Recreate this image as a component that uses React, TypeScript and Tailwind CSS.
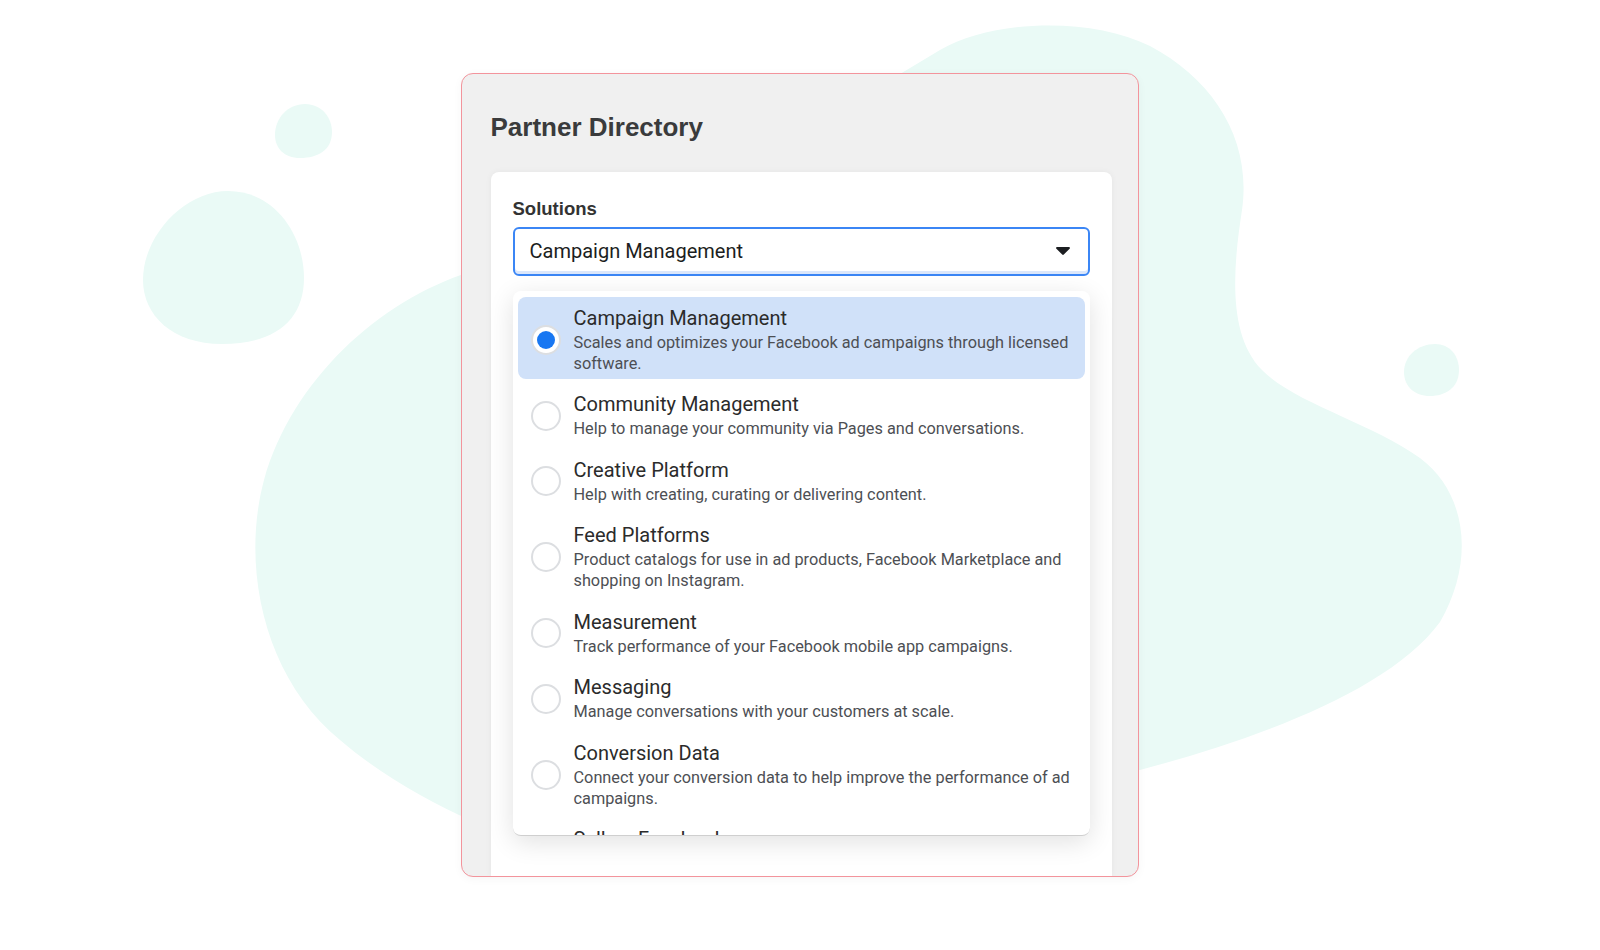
import React from "react";

type Solution = {
  title: string;
  description?: string;
};

const solutions: Solution[] = [
  {
    title: "Campaign Management",
    description: "Scales and optimizes your Facebook ad campaigns through licensed software.",
  },
  {
    title: "Community Management",
    description: "Help to manage your community via Pages and conversations.",
  },
  {
    title: "Creative Platform",
    description: "Help with creating, curating or delivering content.",
  },
  {
    title: "Feed Platforms",
    description: "Product catalogs for use in ad products, Facebook Marketplace and shopping on Instagram.",
  },
  {
    title: "Measurement",
    description: "Track performance of your Facebook mobile app campaigns.",
  },
  {
    title: "Messaging",
    description: "Manage conversations with your customers at scale.",
  },
  {
    title: "Conversion Data",
    description: "Connect your conversion data to help improve the performance of ad campaigns.",
  },
  {
    // only the top of this one shows under the list's edge
    title: "Sell on Facebook",
  },
];

function Blobs() {
  return (
    <svg
      className="absolute inset-0 pointer-events-none"
      width="1600"
      height="950"
      viewBox="0 0 1600 950"
      fill="#eafaf6"
    >
      <path d="M305 104 C322 104 332 118 332 132 C332 150 318 158 300 158 C284 158 275 148 275 135 C275 118 288 104 305 104 Z" />
      <path d="M228 191 C275 191 304 235 304 278 C304 320 275 344 222 344 C172 344 143 315 143 280 C143 235 185 191 228 191 Z" />
      <path d="M1435 344 C1450 344 1459 356 1459 370 C1459 388 1445 396 1430 396 C1414 396 1404 386 1404 372 C1404 356 1418 344 1435 344 Z" />
      <path d="M470 272 C380 300 292 380 264 480 C240 570 266 680 340 740 C382 776 430 802 470 820 L1140 770 C1260 738 1390 690 1440 622 C1476 560 1466 492 1420 458 C1370 422 1296 404 1262 370 C1226 334 1234 262 1242 210 C1252 140 1214 80 1150 46 C1090 16 992 20 940 50 L900 74 L470 74 Z" />
    </svg>
  );
}

function Radio({ checked }: { checked: boolean }) {
  return (
    <span className="flex h-[30px] w-[30px] shrink-0 items-center justify-center rounded-full border-2 border-[#dcdee1] bg-white">
      {checked && <span className="h-[18px] w-[18px] rounded-full bg-[#1877f2]" />}
    </span>
  );
}

function Caret() {
  return (
    <svg width="14" height="8" viewBox="0 0 14 8">
      <path d="M1.2 0 H12.8 C13.8 0 14.3 1.1 13.6 1.8 L7.8 7.6 C7.35 8.05 6.65 8.05 6.2 7.6 L0.4 1.8 C-0.3 1.1 0.2 0 1.2 0 Z" fill="#1c1e21" />
    </svg>
  );
}

export default function App() {
  const selected = "Campaign Management";

  return (
    <div className="relative min-h-[950px] w-full overflow-hidden bg-white">
      <Blobs />

      <div className="relative flex justify-center pt-[73px]">
        <div className="flex h-[804px] w-[678px] flex-col overflow-hidden rounded-[12px] border-[1.5px] border-[#f3949c] bg-[#f0f0f0] pl-[28.5px] pr-[26.5px] pt-[36.5px] shadow-[0_2px_10px_rgba(0,0,0,0.04)]">
          <h1 className="mb-[29px] text-[26px] font-bold leading-8 text-[#3a3b3c] [font-family:'Liberation_Sans',Arial,sans-serif]">
            Partner Directory
          </h1>

          <div className="flex-1 rounded-t-[8px] bg-white px-[22px] pt-[25px] shadow-[0_0_6px_rgba(0,0,0,0.05)]">
            <label className="mb-[6px] block text-[18.5px] font-bold leading-6 text-[#333333] [font-family:'Liberation_Sans',Arial,sans-serif]">
              Solutions
            </label>

            <div className="flex h-[49px] items-center justify-between rounded-[6px] border-2 border-[#3b86f5] bg-white pl-[15px] pr-[18px] shadow-[inset_0_-3px_0_#dbe7fb] [font-family:Roboto,'Liberation_Sans',sans-serif]">
              <span className="text-[20px] leading-6 text-[#1c1e21]">{selected}</span>
              <Caret />
            </div>

            <div className="mt-[15px] h-[545px] overflow-hidden rounded-[8px] border-b border-[#cfcfcf] bg-white shadow-[0_6px_26px_rgba(0,0,0,0.12)] [font-family:Roboto,'Liberation_Sans',sans-serif]">
              <ul className="flex flex-col gap-[4.5px] px-[5px] pt-[6px]">
                {solutions.map((s) => {
                  const active = s.title === selected;
                  return (
                    <li
                      key={s.title}
                      className={
                        active
                          ? "flex items-center rounded-[8px] bg-[#d0e1f9] pb-[5px] pl-[13px] pr-[8px] pt-[9px]"
                          : s.description
                            ? "flex items-center rounded-[8px] pb-[5px] pl-[13px] pr-[8px] pt-[9px]"
                            : "flex min-h-[82px] items-start rounded-[8px] pb-[5px] pl-[13px] pr-[8px] pt-[9px]"
                      }
                    >
                      <span className={s.description || active ? "" : "mt-[34px]"}>
                        <Radio checked={active} />
                      </span>
                      <div className="ml-[13px] flex-1">
                        <div className="text-[20px] leading-6 text-[#2b2b2b]">{s.title}</div>
                        {s.description && (
                          <div className="mt-[2px] text-[16.3px] leading-[21px] text-[#4d4f54]">{s.description}</div>
                        )}
                      </div>
                    </li>
                  );
                })}
              </ul>
            </div>
          </div>
        </div>
      </div>
    </div>
  );
}
